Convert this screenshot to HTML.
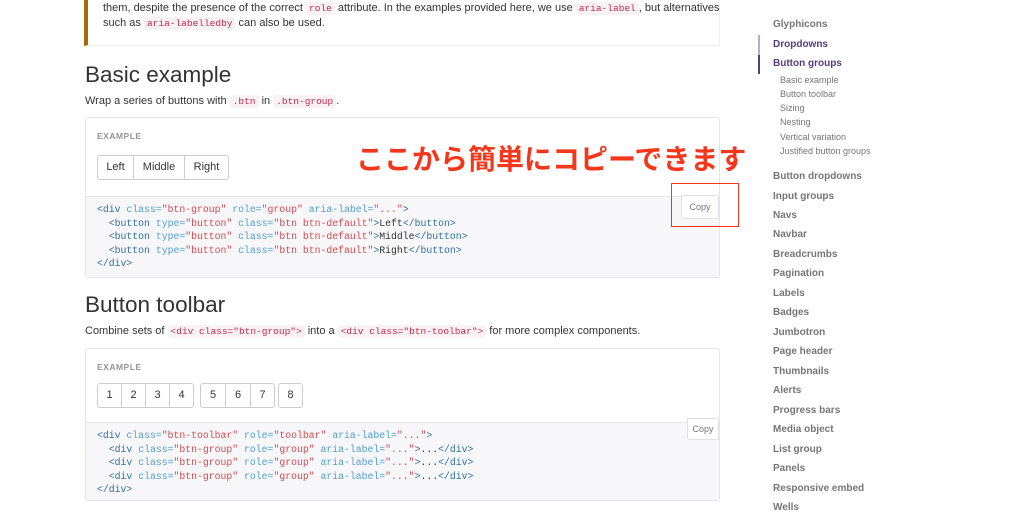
<!DOCTYPE html>
<html><head><meta charset="utf-8"><style>
*{margin:0;padding:0;box-sizing:border-box}
body{width:1024px;height:520px;overflow:hidden;background:#fff;font-family:"Liberation Sans",sans-serif;color:#333;position:relative}
.a{position:absolute;white-space:nowrap}
code{font-family:"Liberation Mono",monospace;color:#c7254e;background:#f9f2f4;padding:1px 3px;border-radius:3px;font-size:9.5px}
.t{font-size:11px}
h2{position:absolute;font-size:22.5px;font-weight:500;color:#333}
.box{position:absolute;left:85px;width:635px;border:1px solid #e5e5e5;border-radius:3px}
.lab{position:absolute;left:11px;font-size:8.5px;font-weight:bold;color:#959595;letter-spacing:.5px}
.code{position:absolute;left:0;right:0;background:#f7f7f9;border-top:1px solid #e8e8ec;font-family:"Liberation Mono",monospace;font-size:9.8px;line-height:13.6px;padding:6px 11px;color:#333;white-space:pre}
.tg{color:#2f6f9f}.at{color:#4f9fcf}.s{color:#d44950}
.bg{position:absolute;display:flex}
.bg span{display:block;border:1px solid #ccc;margin-left:-1px;height:25px;line-height:23px;font-size:11px;text-align:center;background:#fff}
.copy{position:absolute;right:0;background:#fff;border:1px solid #e1e1e8;border-radius:0 3px 0 3px;font-size:9px;color:#767676;text-align:center}
.sb{position:absolute;left:773px;font-size:10px;font-weight:bold;color:#767676}
.ss{position:absolute;left:780px;font-size:9px;color:#767676}
</style></head><body>
<div class="a" style="left:84px;top:0;width:636px;height:46px;border:1px solid #eee;border-top:none;border-left:4px solid #aa6708"></div>
<div class="a t" style="left:103px;top:2px">them, despite the presence of the correct <code>role</code> attribute. In the examples provided here, we use <code>aria-label</code>, but alternatives</div>
<div class="a t" style="left:103px;top:17px">such as <code>aria-labelledby</code> can also be used.</div>
<h2 style="left:85px;top:62px">Basic example</h2>
<div class="a t" style="left:85px;top:95px">Wrap a series of buttons with <code>.btn</code> in <code>.btn-group</code>.</div>
<div class="box" style="top:117px;height:161px">
<div class="lab" style="top:13px">EXAMPLE</div>
<div class="bg" style="left:11px;top:37px"><span style="width:37px;border-radius:3px 0 0 3px;margin-left:0">Left</span><span style="width:52px">Middle</span><span style="width:45px;border-radius:0 3px 3px 0">Right</span></div>
<div class="code" style="top:78px;bottom:0"><span class="tg">&lt;div</span> <span class="at">class=</span><span class="s">"btn-group"</span> <span class="at">role=</span><span class="s">"group"</span> <span class="at">aria-label=</span><span class="s">"..."</span><span class="tg">&gt;</span>
  <span class="tg">&lt;button</span> <span class="at">type=</span><span class="s">"button"</span> <span class="at">class=</span><span class="s">"btn btn-default"</span><span class="tg">&gt;</span>Left<span class="tg">&lt;/button&gt;</span>
  <span class="tg">&lt;button</span> <span class="at">type=</span><span class="s">"button"</span> <span class="at">class=</span><span class="s">"btn btn-default"</span><span class="tg">&gt;</span>Middle<span class="tg">&lt;/button&gt;</span>
  <span class="tg">&lt;button</span> <span class="at">type=</span><span class="s">"button"</span> <span class="at">class=</span><span class="s">"btn btn-default"</span><span class="tg">&gt;</span>Right<span class="tg">&lt;/button&gt;</span>
<span class="tg">&lt;/div&gt;</span></div>
<div class="copy" style="top:77px;width:38px;height:24px;line-height:22px">Copy</div>
</div>
<div class="a" style="left:356px;top:139px;font-size:28px;color:#f4361a;font-family:'Noto Sans CJK JP',sans-serif;font-weight:bold;line-height:38px">ここから簡単にコピーできます</div>
<div class="a" style="left:671px;top:183px;width:68px;height:44px;border:1.5px solid #f4361a"></div>
<h2 style="left:85px;top:292px">Button toolbar</h2>
<div class="a t" style="left:85px;top:325px">Combine sets of <code>&lt;div class="btn-group"&gt;</code> into a <code>&lt;div class="btn-toolbar"&gt;</code> for more complex components.</div>
<div class="box" style="top:348px;height:153px">
<div class="lab" style="top:13px">EXAMPLE</div>
<div class="bg" style="left:11px;top:34px"><span style="width:25px;margin-left:0;border-radius:3px 0 0 3px">1</span><span style="width:25px">2</span><span style="width:25px">3</span><span style="width:25px;border-radius:0 3px 3px 0">4</span></div>
<div class="bg" style="left:114px;top:34px"><span style="width:26px;margin-left:0;border-radius:3px 0 0 3px">5</span><span style="width:26px">6</span><span style="width:25px;border-radius:0 3px 3px 0">7</span></div>
<div class="bg" style="left:192px;top:34px"><span style="width:25px;margin-left:0;border-radius:3px">8</span></div>
<div class="code" style="top:73px;bottom:0"><span class="tg">&lt;div</span> <span class="at">class=</span><span class="s">"btn-toolbar"</span> <span class="at">role=</span><span class="s">"toolbar"</span> <span class="at">aria-label=</span><span class="s">"..."</span><span class="tg">&gt;</span>
  <span class="tg">&lt;div</span> <span class="at">class=</span><span class="s">"btn-group"</span> <span class="at">role=</span><span class="s">"group"</span> <span class="at">aria-label=</span><span class="s">"..."</span><span class="tg">&gt;</span>...<span class="tg">&lt;/div&gt;</span>
  <span class="tg">&lt;div</span> <span class="at">class=</span><span class="s">"btn-group"</span> <span class="at">role=</span><span class="s">"group"</span> <span class="at">aria-label=</span><span class="s">"..."</span><span class="tg">&gt;</span>...<span class="tg">&lt;/div&gt;</span>
  <span class="tg">&lt;div</span> <span class="at">class=</span><span class="s">"btn-group"</span> <span class="at">role=</span><span class="s">"group"</span> <span class="at">aria-label=</span><span class="s">"..."</span><span class="tg">&gt;</span>...<span class="tg">&lt;/div&gt;</span>
<span class="tg">&lt;/div&gt;</span></div>
<div class="copy" style="top:69px;width:32px;height:22px;line-height:20px">Copy</div>
</div>
<div class="a" style="left:758px;top:35px;width:2px;height:20px;background:#b9a9d4"></div>
<div class="a" style="left:758px;top:55px;width:2px;height:19px;background:#563d7c"></div>
<div class="sb" style="top:19px">Glyphicons</div>
<div class="sb" style="top:39px;color:#563d7c">Dropdowns</div>
<div class="sb" style="top:58px;color:#563d7c">Button groups</div>
<div class="ss" style="top:75px">Basic example</div>
<div class="ss" style="top:89px">Button toolbar</div>
<div class="ss" style="top:103px">Sizing</div>
<div class="ss" style="top:117px">Nesting</div>
<div class="ss" style="top:132px">Vertical variation</div>
<div class="ss" style="top:146px">Justified button groups</div>
<div class="sb" style="top:171px">Button dropdowns</div>
<div class="sb" style="top:191px">Input groups</div>
<div class="sb" style="top:210px">Navs</div>
<div class="sb" style="top:229px">Navbar</div>
<div class="sb" style="top:249px">Breadcrumbs</div>
<div class="sb" style="top:268px">Pagination</div>
<div class="sb" style="top:288px">Labels</div>
<div class="sb" style="top:307px">Badges</div>
<div class="sb" style="top:327px">Jumbotron</div>
<div class="sb" style="top:346px">Page header</div>
<div class="sb" style="top:366px">Thumbnails</div>
<div class="sb" style="top:385px">Alerts</div>
<div class="sb" style="top:405px">Progress bars</div>
<div class="sb" style="top:424px">Media object</div>
<div class="sb" style="top:444px">List group</div>
<div class="sb" style="top:463px">Panels</div>
<div class="sb" style="top:483px">Responsive embed</div>
<div class="sb" style="top:502px">Wells</div>
</body></html>
